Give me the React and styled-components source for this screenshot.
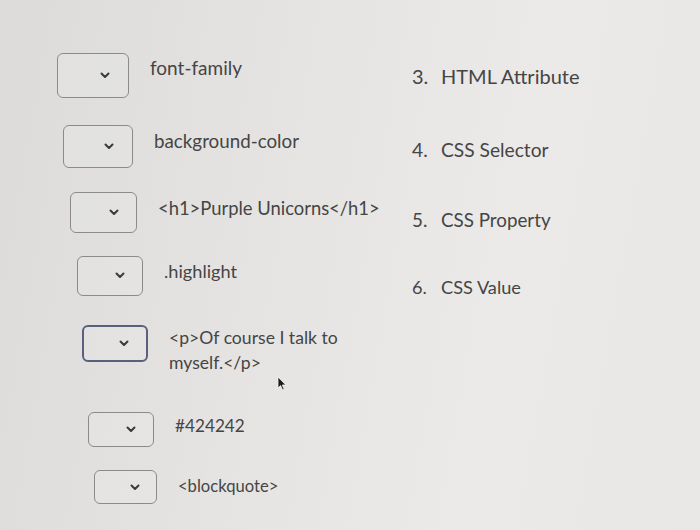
import styled, { createGlobalStyle } from 'styled-components';

const GlobalStyle = createGlobalStyle`
  html, body {
    margin: 0;
    padding: 0;
  }
  body {
    width: 700px;
    height: 530px;
    overflow: hidden;
    font-family: 'Lato', 'Noto Sans', sans-serif;
    color: #454545;
  }
`;

// Fondo de la pantalla
const Page = styled.div`
  position: relative;
  width: 700px;
  height: 530px;
  box-sizing: border-box;
  padding-top: 53px;
  display: flex;
  background: linear-gradient(100deg, #dcdbd9 0%, #e4e3e1 35%, #ebeae8 70%, #e8e7e5 100%);
`;

// Columna con los selects
const Answers = styled.div`
  width: 412px;
  display: flex;
  flex-direction: column;
`;

const Row = styled.div`
  display: flex;
  align-items: flex-start;
  gap: 21px;
  height: ${(p) => p.$pitch}px;
  padding-left: ${(p) => p.$indent}px;
`;

const Select = styled.div`
  flex: none;
  width: ${(p) => p.$w}px;
  height: ${(p) => p.$h}px;
  box-sizing: border-box;
  border: ${(p) => (p.$focused ? '2px solid #5b5f7e' : '1.5px solid #8c8b89')};
  border-radius: 6px;
  background: rgba(255, 255, 255, 0.12);
  display: flex;
  align-items: center;
  justify-content: flex-end;
  padding-right: ${(p) => Math.round(p.$w * 0.25)}px;
`;

const Chevron = styled.svg`
  width: 10px;
  height: 7px;
`;

const Label = styled.div`
  font-size: ${(p) => p.$size}px;
  line-height: 25px;
  margin-top: ${(p) => p.$top}px;
  width: ${(p) => (p.$wrap ? `${p.$wrap}px` : 'auto')};
  white-space: ${(p) => (p.$wrap ? 'normal' : 'nowrap')};
`;

// Columna con las opciones numeradas
const Options = styled.ol`
  list-style: none;
  margin: 0;
  padding: 10px 0 0 0;
  display: flex;
  flex-direction: column;
`;

const Option = styled.li`
  display: flex;
  font-size: ${(p) => p.$size}px;
  line-height: 26px;
  height: ${(p) => p.$pitch}px;
`;

const Num = styled.span`
  width: 29px;
`;

const Cursor = styled.svg`
  position: absolute;
  left: 277px;
  top: 376px;
  width: 10px;
  height: 15px;
`;

const rows = [
  { text: 'font-family', indent: 57, w: 72, h: 45, pitch: 72, top: 2, size: 19 },
  { text: 'background-color', indent: 63, w: 70, h: 43, pitch: 68, top: 3, size: 18.8 },
  { text: '<h1>Purple Unicorns</h1>', indent: 70, w: 67, h: 41, pitch: 64, top: 4, size: 18.4 },
  { text: '.highlight', indent: 77, w: 66, h: 40, pitch: 70, top: 3, size: 18.2 },
  { text: '<p>Of course I talk to myself.</p>', indent: 82, w: 66, h: 37, pitch: 87, top: 0, size: 17.6, wrap: 175, focused: true },
  { text: '#424242', indent: 88, w: 66, h: 35, pitch: 59, top: 1, size: 17.2 },
  { text: '<blockquote>', indent: 94, w: 63, h: 34, pitch: 60, top: 4, size: 16.6 },
];

const options = [
  { n: 3, text: 'HTML Attribute', pitch: 74, size: 20 },
  { n: 4, text: 'CSS Selector', pitch: 70, size: 19.2 },
  { n: 5, text: 'CSS Property', pitch: 67, size: 18.8 },
  { n: 6, text: 'CSS Value', pitch: 60, size: 18.2 },
];

const App = () => {
  return (
    <>
      <GlobalStyle />
      <Page>
        <Answers>
          {rows.map((r) => (
            <Row key={r.text} $indent={r.indent} $pitch={r.pitch}>
              <Select $w={r.w} $h={r.h} $focused={r.focused}>
                <Chevron viewBox="0 0 10 7">
                  <path d="M1.5 1.5 L5 5 L8.5 1.5" fill="none" stroke="#3a3a3a" strokeWidth="2" strokeLinecap="round" strokeLinejoin="round" />
                </Chevron>
              </Select>
              <Label $top={r.top} $size={r.size} $wrap={r.wrap}>{r.text}</Label>
            </Row>
          ))}
        </Answers>
        <Options>
          {options.map((o) => (
            <Option key={o.n} $pitch={o.pitch} $size={o.size}>
              <Num>{o.n}.</Num>
              {o.text}
            </Option>
          ))}
        </Options>
        <Cursor viewBox="0 0 10 15">
          <path d="M1 1 L1 12 L3.6 9.6 L5.6 14 L7.2 13.3 L5.3 9 L8.8 9 Z" fill="#1c1c1c" stroke="#f4f4f4" strokeWidth="0.8" />
        </Cursor>
      </Page>
    </>
  );
};

export default App;
